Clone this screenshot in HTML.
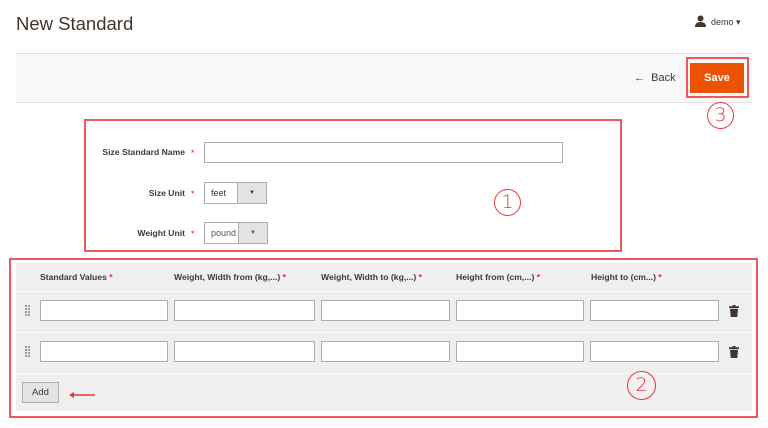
<!DOCTYPE html>
<html><head><style>
*{box-sizing:border-box;margin:0;padding:0}
body{width:768px;height:428px;background:#fff;font-family:"Liberation Sans",sans-serif;color:#303030;position:relative;overflow:hidden}
.a{position:absolute}
.lbl{font-size:8.6px;font-weight:bold;color:#3a3a3a;white-space:nowrap}
.rl{position:absolute;right:583px;text-align:right}
.st{color:#e22626}
.in{position:absolute;background:#fff;border:1px solid #adadad;height:21px}
.sel{position:absolute;background:#fff;border:1px solid #adadad;height:22px;font-size:9px;padding:5px 0 0 6px;color:#333;overflow:hidden;white-space:nowrap}
.sel i{position:absolute;right:0;top:0;width:29px;height:20px;background:#e3e3e3;border-left:1px solid #adadad;font-style:normal;font-size:6px;text-align:center;line-height:20px}
.red{position:absolute;border:2px solid #f0575a}
.circ{position:absolute;border:1.5px solid #e8353a;border-radius:50%;color:#e8353a;font-size:19px;text-align:center;font-family:"DejaVu Sans",sans-serif;font-weight:300}
.row{position:absolute;left:16px;width:736px;height:1px;background:#fafafa}
</style></head><body>
<div class="a" style="left:16px;top:13px;font-size:18.5px;color:#41362f">New Standard</div>
<svg class="a" style="left:695px;top:15px" width="11" height="12" viewBox="0 0 11 12"><circle cx="5.5" cy="3.5" r="3" fill="#41362f"/><path d="M0 12 Q0 7 5.5 7 Q11 7 11 12Z" fill="#41362f"/></svg>
<div class="a" style="left:711px;top:17px;font-size:9px;color:#41362f">demo ▾</div>
<div class="a" style="left:16px;top:53px;width:736px;height:50px;background:#f8f8f8;border-top:1px solid #e3e3e3;border-bottom:1px solid #e3e3e3"></div>
<div class="a" style="left:634px;top:72px;font-size:11px;color:#41362f">←&nbsp; Back</div>
<div class="a" style="left:690px;top:63px;width:54px;height:30px;background:#eb5202;color:#fff;font-weight:bold;font-size:11px;text-align:center;line-height:30px">Save</div>
<div class="red" style="left:686px;top:57px;width:63px;height:41px"></div>
<div class="circ" style="left:707px;top:102px;width:27px;height:27px;line-height:24px">3</div>

<div class="red" style="left:84px;top:119px;width:538px;height:133px"></div>
<div class="lbl rl" style="top:147px">Size Standard Name</div>
<div class="a st" style="left:191px;top:148px;font-size:9px">*</div>
<div class="in" style="left:204px;top:142px;width:359px"></div>
<div class="lbl rl" style="top:188px">Size Unit</div>
<div class="a st" style="left:191px;top:189px;font-size:9px">*</div>
<div class="sel" style="left:204px;top:182px;width:63px">feet<i>▼</i></div>
<div class="lbl rl" style="top:228px">Weight Unit</div>
<div class="a st" style="left:191px;top:229px;font-size:9px">*</div>
<div class="sel" style="left:204px;top:222px;width:64px;color:#555">pound<i>▼</i></div>
<div class="circ" style="left:494px;top:189px;width:27px;height:27px;line-height:24px">1</div>

<div class="a" style="left:16px;top:263px;width:736px;height:148px;background:#efefef"></div>
<div class="red" style="left:9px;top:258px;width:749px;height:160px"></div>
<div class="a lbl" style="left:40px;top:272px">Standard Values <span class="st">*</span></div>
<div class="a lbl" style="left:174px;top:272px">Weight, Width from (kg,...) <span class="st">*</span></div>
<div class="a lbl" style="left:321px;top:272px">Weight, Width to (kg,...) <span class="st">*</span></div>
<div class="a lbl" style="left:456px;top:272px">Height from (cm,...) <span class="st">*</span></div>
<div class="a lbl" style="left:591px;top:272px">Height to (cm...) <span class="st">*</span></div>
<div class="row" style="top:291px"></div>
<div class="row" style="top:332px"></div>
<div class="row" style="top:373px"></div>

<div class="in" style="left:40px;top:300px;width:128px"></div>
<div class="in" style="left:174px;top:300px;width:141px"></div>
<div class="in" style="left:321px;top:300px;width:129px"></div>
<div class="in" style="left:456px;top:300px;width:128px"></div>
<div class="in" style="left:590px;top:300px;width:129px"></div>
<div class="in" style="left:40px;top:341px;width:128px"></div>
<div class="in" style="left:174px;top:341px;width:141px"></div>
<div class="in" style="left:321px;top:341px;width:129px"></div>
<div class="in" style="left:456px;top:341px;width:128px"></div>
<div class="in" style="left:590px;top:341px;width:129px"></div>

<svg class="a" style="left:25px;top:305px" width="5" height="11"><g fill="#9a9a9a"><rect x="0" y="0" width="2" height="2"/><rect x="3" y="0" width="2" height="2"/><rect x="0" y="3" width="2" height="2"/><rect x="3" y="3" width="2" height="2"/><rect x="0" y="6" width="2" height="2"/><rect x="3" y="6" width="2" height="2"/><rect x="0" y="9" width="2" height="2"/><rect x="3" y="9" width="2" height="2"/></g></svg>
<svg class="a" style="left:25px;top:346px" width="5" height="11"><g fill="#9a9a9a"><rect x="0" y="0" width="2" height="2"/><rect x="3" y="0" width="2" height="2"/><rect x="0" y="3" width="2" height="2"/><rect x="3" y="3" width="2" height="2"/><rect x="0" y="6" width="2" height="2"/><rect x="3" y="6" width="2" height="2"/><rect x="0" y="9" width="2" height="2"/><rect x="3" y="9" width="2" height="2"/></g></svg>
<svg class="a" style="left:729px;top:305px" width="10" height="12" viewBox="0 0 10 12"><path d="M3.5 0h3v1.2h3.5v1.8H0V1.2h3.5z M1 3.8h8l-0.7 8.2H1.7z" fill="#41362f"/></svg>
<svg class="a" style="left:729px;top:346px" width="10" height="12" viewBox="0 0 10 12"><path d="M3.5 0h3v1.2h3.5v1.8H0V1.2h3.5z M1 3.8h8l-0.7 8.2H1.7z" fill="#41362f"/></svg>

<div class="a" style="left:22px;top:382px;width:37px;height:21px;background:#e3e3e3;border:1px solid #adadad;font-size:9.5px;text-align:center;line-height:19px;color:#41362f">Add</div>
<svg class="a" style="left:69px;top:391px" width="27" height="8"><path d="M26 4H4" stroke="#e8353a" stroke-width="1.5"/><path d="M0 4l5-3v6z" fill="#e8353a"/></svg>
<div class="circ" style="left:627px;top:371px;width:29px;height:29px;line-height:26px">2</div>
</body></html>
